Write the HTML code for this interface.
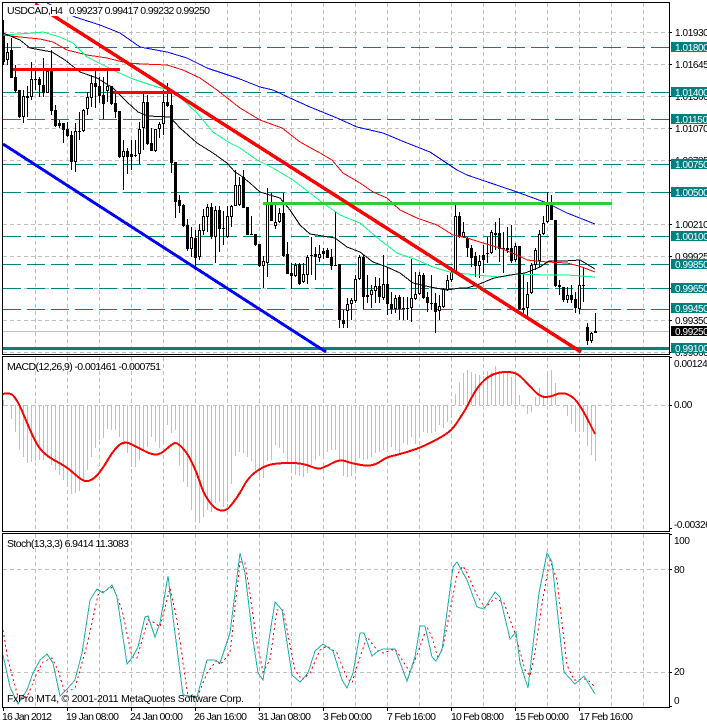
<!DOCTYPE html>
<html><head><meta charset="utf-8"><title>USDCAD,H4</title>
<style>
html,body{margin:0;padding:0;background:#fff}
svg{display:block}
text{font-family:"Liberation Sans",sans-serif;font-size:10px;letter-spacing:-.4px;fill:#000}
text.c{font-size:10.5px;letter-spacing:0}
</style></head><body>
<svg width="707" height="724" viewBox="0 0 707 724" xmlns="http://www.w3.org/2000/svg">
<rect width="707" height="724" fill="#fff"/>
<g shape-rendering="crispEdges" fill="none">
<!-- grid -->
<path stroke="#c0c0c0" stroke-dasharray="4 3" d="M3 32.5H669M3 64.5H669M3 96.5H669M3 128.5H669M3 160.5H669M3 192.5H669M3 224.5H669M3 256.5H669M3 288.5H669M3 320.5H669M3 352.5H669M3 405.5H669M3 569.5H669M3 672.5H669"/>
<path stroke="#c0c0c0" stroke-dasharray="4 3" d="M35.5 3V354M67.5 3V354M99.5 3V354M131.5 3V354M163.5 3V354M195.5 3V354M227.5 3V354M259.5 3V354M291.5 3V354M323.5 3V354M355.5 3V354M387.5 3V354M419.5 3V354M451.5 3V354M483.5 3V354M515.5 3V354M547.5 3V354M579.5 3V354M611.5 3V354M643.5 3V354M35.5 357V531M67.5 357V531M99.5 357V531M131.5 357V531M163.5 357V531M195.5 357V531M227.5 357V531M259.5 357V531M291.5 357V531M323.5 357V531M355.5 357V531M387.5 357V531M419.5 357V531M451.5 357V531M483.5 357V531M515.5 357V531M547.5 357V531M579.5 357V531M611.5 357V531M643.5 357V531M35.5 534V707M67.5 534V707M99.5 534V707M131.5 534V707M163.5 534V707M195.5 534V707M227.5 534V707M259.5 534V707M291.5 534V707M323.5 534V707M355.5 534V707M387.5 534V707M419.5 534V707M451.5 534V707M483.5 534V707M515.5 534V707M547.5 534V707M579.5 534V707M611.5 534V707M643.5 534V707"/>
<!-- horizontal levels -->
<path stroke="#c0c0c0" d="M3 331.5H669"/>
<path stroke="#008080" stroke-dasharray="18 6" d="M3 47.5H669M3 92.5H669M3 119.5H669M3 164.5H669M3 192.5H669M3 236.5H669M3 264.5H669M3 288.5H669M3 309.5H669"/>
<rect x="3" y="347" width="666" height="3" fill="#008080"/>
<!-- candle wicks -->
<path stroke="#000" d="M3.5 20V65M7.5 43V65M11.5 38V78M15.5 65V93M19.5 90V118M23.5 90V123M27.5 86V117M31.5 62V100M35.5 70V90M39.5 77V97M43.5 58V97M47.5 70V93M51.5 50V115M55.5 105V127M59.5 120V128M63.5 123V143M67.5 122V137M71.5 131V170M75.5 123V172M79.5 112V140M83.5 109V132M87.5 92V115M91.5 75V107M95.5 70V108M99.5 77V103M103.5 77V119M107.5 68V102M111.5 86V105M115.5 93V118M119.5 111V158M123.5 140V190M127.5 148V174M131.5 140V170M135.5 140V157M139.5 122V164M143.5 92V150M147.5 95V145M151.5 128V151M155.5 129V152M159.5 122V138M163.5 90V135M167.5 83V107M171.5 93V173M175.5 162V218M179.5 195V213M183.5 204V227M187.5 219V251M191.5 227V257M195.5 230V270M199.5 224V260M203.5 209V235M207.5 204V232M211.5 203V239M215.5 206V263M219.5 206V252M223.5 211V245M227.5 206V238M231.5 205V227M235.5 170V206M239.5 177V206M243.5 170V208M247.5 207V235M251.5 216V235M255.5 234V246M259.5 244V267M263.5 256V288M267.5 188V277M271.5 193V221M275.5 202V229M279.5 208V223M283.5 193V257M287.5 242V274M291.5 263V289M295.5 263V277M299.5 263V285M303.5 263V283M307.5 255V284M311.5 237V275M315.5 247V280M319.5 245V262M323.5 248V259M327.5 248V258M331.5 249V270M335.5 212V266M339.5 264V328M343.5 310V328M347.5 298V328M351.5 298V320M355.5 275V303M359.5 255V280M363.5 255V309M367.5 275V303M371.5 285V308M375.5 277V303M379.5 278V303M383.5 255V300M387.5 267V315M391.5 292V314M395.5 295V313M399.5 295V320M403.5 297V320M407.5 297V320M411.5 259V322M415.5 272V300M419.5 272V295M423.5 273V299M427.5 292V312M431.5 275V310M435.5 293V333M439.5 295V320M443.5 288V308M447.5 275V291M451.5 267V282M455.5 205V272M459.5 212V238M463.5 222V238M467.5 237V257M471.5 245V267M475.5 252V277M479.5 255V278M483.5 245V273M487.5 237V263M491.5 230V254M495.5 222V250M499.5 218V262M503.5 232V273M507.5 227V253M511.5 225V263M515.5 243V262M519.5 246V310M523.5 273V317M527.5 282V318M531.5 263V294M535.5 248V270M539.5 230V267M543.5 216V235M547.5 192V223M551.5 195V220M555.5 220V287M559.5 280V295M563.5 287V302M567.5 287V303M571.5 285V303M575.5 292V313M579.5 260V314M583.5 268V302M587.5 323V345M591.5 332V343M595.5 313V333"/>
<!-- candle bodies -->
<path stroke="#000" stroke-width="3" d="M3.5 35V62M7.5 52V60M11.5 50V78M15.5 77V91M19.5 90V117M23.5 96V117M27.5 96V98M31.5 79V97M35.5 79V80M39.5 79V85M43.5 85V93M47.5 71V93M51.5 68V111M55.5 110V126M59.5 123V126M63.5 123V130M67.5 129V136M71.5 135V162M75.5 131V162M79.5 131V132M83.5 110V131M87.5 97V109M91.5 83V98M95.5 83V87M99.5 86V96M103.5 95V104M107.5 86V91M111.5 86V104M115.5 103V112M119.5 111V157M123.5 151V157M127.5 151V157M131.5 154V157M135.5 155V156M139.5 129V154M143.5 102V128M147.5 102V144M151.5 143V151M155.5 129V151M159.5 124V129M163.5 102V124M167.5 102V106M171.5 105V163M175.5 162V202M179.5 200V206M183.5 205V226M187.5 225V249M191.5 237V249M195.5 238V258M199.5 230V257M203.5 216V231M207.5 207V217M211.5 207V237M215.5 210V237M219.5 210V229M223.5 228V229M227.5 216V237M231.5 206V217M235.5 185V206M239.5 185V205M243.5 177V208M247.5 207V235M251.5 234V235M255.5 234V245M259.5 244V266M263.5 261V266M267.5 203V263M271.5 203V221M275.5 222V226M279.5 213V222M283.5 213V256M287.5 254V274M291.5 273V276M295.5 265V276M299.5 264V284M303.5 274V282M307.5 257V275M311.5 255V256M315.5 254V257M319.5 254V258M323.5 251V254M327.5 250V258M331.5 257V266M335.5 265V266M339.5 264V320M343.5 320V324M347.5 304V311M351.5 300V304M355.5 279V301M359.5 257V279M363.5 257V297M367.5 295V297M371.5 290V295M375.5 286V291M379.5 286V297M383.5 284V298M387.5 284V304M391.5 304V309M395.5 298V309M399.5 297V309M403.5 308V309M407.5 308V309M411.5 298V308M415.5 294V299M419.5 275V294M423.5 275V298M427.5 297V303M431.5 303V304M435.5 303V312M439.5 306V311M443.5 289V307M447.5 280V290M451.5 272V280M455.5 216V272M459.5 216V237M463.5 232V237M467.5 238V248M471.5 248V258M475.5 256V266M479.5 261V266M483.5 255V260M487.5 253V254M491.5 232V253M495.5 233V235M499.5 233V249M503.5 248V249M507.5 248V250M511.5 248V261M515.5 246V260M519.5 246V309M523.5 308V310M527.5 294V308M531.5 265V293M535.5 250V265M539.5 234V261M543.5 223V234M547.5 205V222M551.5 205V220M555.5 220V286M559.5 285V287M563.5 287V300M567.5 295V300M571.5 295V300M575.5 299V308M579.5 285V309M583.5 285V286M587.5 327V341M591.5 333V341M595.5 331V333"/>
<path stroke="#fff" d="M7.5 53V59M23.5 97V116M31.5 80V96M47.5 72V92M75.5 132V161M83.5 111V130M87.5 98V108M91.5 84V97M107.5 87V90M123.5 152V156M139.5 130V153M143.5 103V127M155.5 130V150M159.5 125V128M163.5 103V123M191.5 238V248M199.5 231V256M203.5 217V230M207.5 208V216M215.5 211V236M227.5 217V236M231.5 207V216M235.5 186V205M239.5 186V204M263.5 262V265M267.5 204V262M275.5 223V225M279.5 214V221M295.5 266V275M303.5 275V281M307.5 258V274M319.5 255V257M347.5 305V310M351.5 301V303M355.5 280V300M359.5 258V278M371.5 291V294M375.5 287V290M383.5 285V297M395.5 299V308M411.5 299V307M415.5 295V298M419.5 276V293M439.5 307V310M443.5 290V306M447.5 281V289M451.5 273V279M455.5 217V271M463.5 233V236M479.5 262V265M491.5 233V252M515.5 247V259M527.5 295V307M531.5 266V292M535.5 251V264M539.5 235V260M543.5 224V233M547.5 206V221M567.5 296V299M579.5 286V308M591.5 334V340"/>
<!-- moving averages -->
<polyline stroke="#0000ff" points="47,3 75,17 100,25 120,33 140,47 167,52 187,58 207,68 240,79 260,87 273,90 290,98 310,107 337,118 357,127 383,133 407,143 430,152 457,170 467,175 517,192 547,203 567,213 595,224"/>
<polyline stroke="#ff0000" points="3,35 20,37 40,39 53,42 67,50 87,55 107,58 127,63 143,64 167,65 183,70 200,78 217,90 240,108 260,120 282,128 300,142 320,153 332,160 343,173 360,183 373,192 387,198 400,210 417,218 437,225 453,235 467,238 483,243 500,248 517,255 527,260 547,262 567,263 579,266 595,272"/>
<polyline stroke="#00ff7f" points="3,35 33,33 43,32 60,37 73,43 87,57 103,65 117,72 133,79 157,87 170,90 183,100 197,113 213,132 230,143 240,148 257,160 273,168 293,180 310,193 323,203 340,215 360,223 380,240 397,253 417,260 433,267 453,273 467,274 487,276 500,277 517,274 547,275 567,275 595,277"/>
<polyline stroke="#000" points="3,33 20,40 30,48 52,52 65,60 80,72 97,78 113,88 127,102 138,112 148,116 170,117 180,128 197,143 213,153 227,163 235,172 240,175 250,183 260,192 270,195 280,198 290,210 300,225 310,234 335,238 347,247 360,252 373,262 387,267 400,273 413,283 430,287 447,290 460,288 467,288 477,285 494,278 510,275 525,273 540,267 549,261 564,261 580,260 595,269"/>
<!-- trend lines -->
<rect x="13" y="68" width="107" height="3" fill="#ff0000"/>
<rect x="113" y="91" width="59" height="3" fill="#ff0000"/>
<rect x="263" y="202" width="349" height="3" fill="#32cd32"/>
<line x1="35" y1="4" x2="581" y2="352" stroke="#ff0000" stroke-width="3.5"/>
<line x1="3" y1="144" x2="326" y2="352" stroke="#0000ff" stroke-width="3"/>
<!-- MACD histogram -->
<path stroke="#c0c0c0" d="M3.5 405V400M7.5 405V406M11.5 405V419M15.5 405V432M19.5 405V450M23.5 405V457M27.5 405V463M31.5 405V462M35.5 405V461M39.5 405V460M43.5 405V460M47.5 405V458M51.5 405V465M55.5 405V470M59.5 405V475M63.5 405V480M67.5 405V485M71.5 405V494M75.5 405V493M79.5 405V491M83.5 405V480M87.5 405V470M91.5 405V457M95.5 405V448M99.5 405V440M103.5 405V438M107.5 405V429M111.5 405V430M115.5 405V430M119.5 405V437M123.5 405V445M127.5 405V453M131.5 405V467M135.5 405V467M139.5 405V460M143.5 405V450M147.5 405V447M151.5 405V437M155.5 405V442M159.5 405V448M163.5 405V443M167.5 405V425M171.5 405V433M175.5 405V430M179.5 405V466M183.5 405V482M187.5 405V487M191.5 405V510M195.5 405V522M199.5 405V523M203.5 405V517M207.5 405V510M211.5 405V512M215.5 405V503M219.5 405V502M223.5 405V507M227.5 405V502M231.5 405V484M235.5 405V456M239.5 405V452M243.5 405V453M247.5 405V457M251.5 405V461M255.5 405V470M259.5 405V478M263.5 405V478M267.5 405V461M271.5 405V460M275.5 405V445M279.5 405V448M283.5 405V453M287.5 405V463M291.5 405V470M295.5 405V475M299.5 405V476M303.5 405V477M307.5 405V473M311.5 405V465M315.5 405V460M319.5 405V456M323.5 405V457M327.5 405V452M331.5 405V450M335.5 405V450M339.5 405V462M343.5 405V476M347.5 405V477M351.5 405V476M355.5 405V471M359.5 405V458M363.5 405V460M367.5 405V459M371.5 405V457M375.5 405V453M379.5 405V452M383.5 405V450M387.5 405V452M391.5 405V447M395.5 405V450M399.5 405V453M403.5 405V443M407.5 405V445M411.5 405V437M415.5 405V444M419.5 405V437M423.5 405V432M427.5 405V433M431.5 405V433M435.5 405V432M439.5 405V425M443.5 405V428M447.5 405V422M451.5 405V418M455.5 405V394M459.5 405V382M463.5 405V373M467.5 405V370M471.5 405V372M475.5 405V374M479.5 405V375M483.5 405V376M487.5 405V371M491.5 405V372M495.5 405V366M499.5 405V371M503.5 405V372M507.5 405V372M511.5 405V377M515.5 405V371M519.5 405V395M523.5 405V407M527.5 405V414M531.5 405V412M535.5 405V397M539.5 405V388M543.5 405V395M547.5 405V373M551.5 405V370M555.5 405V383M563.5 405V407M567.5 405V416M571.5 405V424M575.5 405V432M579.5 405V432M583.5 405V432M587.5 405V446M591.5 405V455M595.5 405V461"/>
<!-- MACD signal -->
<path stroke="#ff0000" stroke-width="2" d="M3 394Q10 392 13.5 396Q17 400 20 406.5Q23 413 26.5 421.5Q30 430 34 438.5Q38 447 43 452Q48 457 57.5 462Q67 467 73.5 473Q80 479 83.5 480.5Q87 482 91 480Q95 478 99 473Q103 468 109 458Q115 448 120 444.5Q125 441 131 444Q137 447 143.5 450.5Q150 454 155 454.5Q160 455 166.5 449Q173 443 175.5 443Q178 443 183 448.5Q188 454 192.5 463.5Q197 473 200 482.5Q203 492 207.5 499Q212 506 216 508.5Q220 511 223.5 510.5Q227 510 230 506.5Q233 503 236.5 498Q240 493 243.5 486.5Q247 480 251 476Q255 472 261 468.5Q267 465 273.5 464Q280 463 291 463Q302 463 309.5 466Q317 469 320 468.5Q323 468 331.5 463.5Q340 459 345 461Q350 463 361 465Q372 467 379.5 462Q387 457 392 456Q397 455 408.5 451.5Q420 448 430 443Q440 438 446 434Q452 430 456 424Q460 418 463.5 412.5Q467 407 472 397Q477 387 484.5 380Q492 373 503.5 372Q515 371 521 377Q527 383 533.5 390Q540 397 545 397Q550 397 556 394.5Q562 392 568 394.5Q574 397 579 404.5Q584 412 589.5 423L595 434"/>
<!-- Stochastic -->
<polyline stroke="#ff0000" stroke-dasharray="2 3" points="3,630 8,660 18,697 27,697 37,673 43,662 52,658 58,670 65,693 75,688 87,645 98,595 102,592 113,587 122,610 132,657 137,658 148,620 155,623 160,627 170,588 177,620 188,697 197,698 207,673 217,660 220,665 230,653 240,562 245,563 249,587 257,643 263,672 270,660 277,610 283,610 295,670 302,680 310,673 320,650 327,646 337,653 347,678 352,683 358,663 367,637 377,650 383,653 395,649 410,672 417,655 427,627 432,637 438,658 443,647 457,575 463,566 467,573 477,595 485,608 495,598 504,603 515,633 525,670 530,676 535,653 542,603 550,560 557,580 567,665 574,680 587,679 595,687"/>
<polyline stroke="#20b2aa" points="3,655 10,687 18,704 27,690 33,673 40,660 47,654 53,663 60,696 68,688 75,680 82,653 90,600 97,589 103,593 112,585 117,597 127,664 132,658 138,647 145,617 148,616 155,637 160,623 168,576 175,633 183,695 197,697 207,660 215,660 220,663 230,633 240,553 245,573 253,640 258,673 263,680 270,633 275,602 282,610 292,675 300,682 308,673 315,651 323,644 333,651 342,680 347,688 353,673 360,633 364,633 372,656 378,651 383,649 395,649 407,681 415,657 420,626 425,626 432,657 436,661 442,650 453,567 457,562 467,580 477,607 484,609 495,592 500,597 510,639 516,632 520,663 528,688 539,593 547,553 552,562 564,672 575,684 584,676 595,694"/>
<!-- caption clear area -->
<rect x="3" y="5" width="209" height="11" fill="#fff"/>
<!-- frames -->
<path stroke="#000" d="M2.5 2.5H669.5V354.5H2.5ZM2.5 356.5H669.5V531.5H2.5ZM2.5 533.5H669.5V707.5H2.5Z"/>
<path stroke="#000" d="M669 32.5h3M669 64.5h3M669 96.5h3M669 128.5h3M669 160.5h3M669 192.5h3M669 224.5h3M669 256.5h3M669 288.5h3M669 320.5h3M669 352.5h3M669 405.5h3M669 357.5h3M669 528.5h3M669 534.5h3M669 569.5h3M669 672.5h3M669 706.5h3M3.5 707v4M67.5 707v4M131.5 707v4M195.5 707v4M259.5 707v4M323.5 707v4M387.5 707v4M451.5 707v4M515.5 707v4M579.5 707v4"/>
</g>
<!-- right axis: price scale -->
<text x="675" y="36">1.01930</text>
<text x="675" y="68">1.01645</text>
<text x="675" y="100">1.01360</text>
<text x="675" y="132">1.01070</text>
<text x="675" y="164">1.00785</text>
<text x="675" y="228">1.00210</text>
<text x="675" y="260">0.99925</text>
<text x="675" y="324">0.99350</text>
<text x="675" y="356">0.99060</text>
<g shape-rendering="crispEdges" fill="#008080">
<rect x="671" y="42" width="36" height="10"/><rect x="671" y="87" width="36" height="10"/><rect x="671" y="114" width="36" height="10"/><rect x="671" y="159" width="36" height="10"/><rect x="671" y="187" width="36" height="10"/><rect x="671" y="231" width="36" height="10"/><rect x="671" y="259" width="36" height="10"/><rect x="671" y="283" width="36" height="10"/><rect x="671" y="303" width="36" height="10"/><rect x="671" y="343" width="36" height="10"/>
<rect x="671" y="326" width="36" height="10" fill="#000"/>
</g>
<g style="fill:#fff">
<text x="675" y="51" style="fill:#fff">1.01800</text>
<text x="675" y="96" style="fill:#fff">1.01400</text>
<text x="675" y="123" style="fill:#fff">1.01150</text>
<text x="675" y="168" style="fill:#fff">1.00750</text>
<text x="675" y="196" style="fill:#fff">1.00500</text>
<text x="675" y="240" style="fill:#fff">1.00100</text>
<text x="675" y="268" style="fill:#fff">0.99850</text>
<text x="675" y="292" style="fill:#fff">0.99650</text>
<text x="675" y="312" style="fill:#fff">0.99450</text>
<text x="675" y="335" style="fill:#fff">0.99250</text>
<text x="675" y="352" style="fill:#fff">0.99100</text>
</g>
<text x="674" y="367">0.00124</text>
<text x="674" y="408">0.00</text>
<text x="674" y="528">-0.00326</text>
<text x="674" y="544">100</text>
<text x="674" y="573">80</text>
<text x="674" y="675">20</text>
<text x="674" y="704">0</text>
<!-- panel captions -->
<text class="c" x="7" y="14" textLength="56" lengthAdjust="spacing">USDCAD,H4</text>
<text class="c" x="69" y="14" textLength="141" lengthAdjust="spacing">0.99237 0.99417 0.99232 0.99250</text>
<text class="c" x="7" y="370" textLength="154" lengthAdjust="spacing">MACD(12,26,9) -0.001461 -0.000751</text>
<text class="c" x="7" y="547" textLength="122" lengthAdjust="spacing">Stoch(13,3,3) 6.9414 11.3083</text>
<text class="c" x="7" y="702" textLength="237" lengthAdjust="spacing">FxPro MT4, © 2001-2011 MetaQuotes Software Corp.</text>
<!-- time axis -->
<text class="c" x="2" y="720" textLength="50" lengthAdjust="spacing">16 Jan 2012</text>
<text class="c" x="66" y="720" textLength="53" lengthAdjust="spacing">19 Jan 08:00</text>
<text class="c" x="130" y="720" textLength="53" lengthAdjust="spacing">24 Jan 00:00</text>
<text class="c" x="194" y="720" textLength="53" lengthAdjust="spacing">26 Jan 16:00</text>
<text class="c" x="258" y="720" textLength="53" lengthAdjust="spacing">31 Jan 08:00</text>
<text class="c" x="323" y="720" textLength="49" lengthAdjust="spacing">3 Feb 00:00</text>
<text class="c" x="387" y="720" textLength="49" lengthAdjust="spacing">7 Feb 16:00</text>
<text class="c" x="451" y="720" textLength="53" lengthAdjust="spacing">10 Feb 08:00</text>
<text class="c" x="515" y="720" textLength="54" lengthAdjust="spacing">15 Feb 00:00</text>
<text class="c" x="579" y="720" textLength="54" lengthAdjust="spacing">17 Feb 16:00</text>
</svg>
</body></html>
